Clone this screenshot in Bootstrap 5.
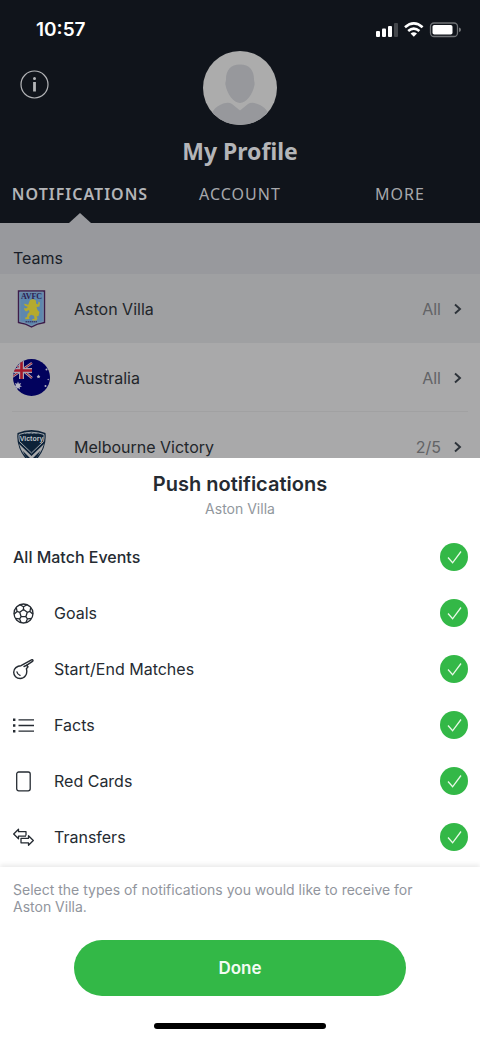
<!DOCTYPE html>
<html lang="en">
<head>
<meta charset="utf-8">
<meta name="viewport" content="width=device-width, initial-scale=1">
<title>My Profile</title>
<link href="https://cdn.jsdelivr.net/npm/bootstrap@5.3.0/dist/css/bootstrap.min.css" rel="stylesheet">
<style>
  body { font-family: Inter, "Liberation Sans", sans-serif; font-size: 16px; line-height: 24px; color: #252b32; background: #fff; }
  svg { display: block; flex: none; }
  .screen { flex: 1 1 0; min-height: 0; overflow: hidden; background: #a9a9aa; }
  .masthead { background: #10141b; color: #b4b5b8; }
  .status-bar { padding: 18px 19px 0 36px; height: 51px; color: #fff; }
  .clock { font-size: 19px; font-weight: 600; }
  .hero { display: grid; grid-template-columns: 1fr auto 1fr; padding: 0 20px; }
  .info-btn { width: 29px; height: 29px; margin-top: 19px; color: #b4b5b8; }
  .page-title { font: 700 23px/30px "Noto Sans", sans-serif; margin: 11px 0 0; }
  .tab-link { display: block; position: relative; padding: 16px 0 17px; font: 400 16px/24px "Noto Sans", sans-serif; letter-spacing: 1px; color: #a7a8ac; text-decoration: none; }
  .tab-link.active { font-weight: 600; color: #b4b5b8; }
  .tab-link.active::after { content: ""; position: absolute; bottom: 0; left: 50%; margin-left: -11px; border: 11px solid transparent; border-top-width: 0; border-bottom: 10px solid #98999d; }
  .section-title { background: #98999d; color: #191e29; font-size: 16px; font-weight: 400; line-height: 24px; padding: 23px 13px 4px; margin: 0; }
  .team { height: 69px; padding: 0 18px 0 13px; color: #22262b; text-decoration: none; position: relative; }
  .team.picked { background: #9fa0a2; }
  .team:not(.picked)::after { content: ""; position: absolute; left: 12px; right: 12px; bottom: 0; border-bottom: 1px solid #a1a1a2; }
  .crest { width: 37px; margin-right: 24px; }
  .team-value { color: #626366; margin-right: 13px; }
  .sheet-head { padding: 12px 13px 9px; }
  .sheet-title { font-size: 20px; line-height: 28px; font-weight: 600; margin: 0; }
  .sheet-sub { font-size: 14px; line-height: 22px; color: #91979d; margin: 0; }
  .event { height: 56px; padding: 0 12px 0 13px; }
  .event svg { width: 21px; margin-right: 20px; color: #252b32; }
  .tick { appearance: none; width: 28px; height: 28px; margin: 0; border-radius: 50%; background: #ccc; }
  .tick:checked { background: #33b847 url("data:image/svg+xml,%3Csvg xmlns='http://www.w3.org/2000/svg' viewBox='0 0 28 28'%3E%3Cpath d='M8 14.5l4.6 5.3L21 8.5' fill='none' stroke='%23e9f9e8' stroke-width='1.3'/%3E%3C/svg%3E"); }
  .sheet-foot { padding: 14px 13px 11px; margin-top: 2px; box-shadow: 0 -2px 5px rgba(0,0,0,.09); }
  .hint { font-size: 14px; line-height: 17px; color: #91959d; margin: 0 36px 25px 0; }
  .done-btn, .done-btn:hover { width: 73%; height: 56px; padding: 2px 0 0; border: 0; border-radius: 28px; background: #33b847; color: #f3fcf3; font-weight: 600; font-size: 17px; }
  .home-bar { width: 172px; height: 6px; border-radius: 3px; background: #000; margin: 27px auto 0; }
</style>
</head>
<body>
<div class="d-flex flex-column vh-100">
  <main class="screen">
    <header class="masthead">
      <div class="status-bar d-flex justify-content-between">
        <span class="clock">10:57</span>
        <svg width="86" height="24" viewBox="0 0 86 24" fill="#fff">
          <rect x="1" y="13" width="4" height="6" rx="1"/><rect x="7" y="10.500" width="4" height="8.500" rx="1"/><rect x="13" y="8" width="4" height="11" rx="1"/><rect x="19" y="5" width="4" height="14" rx="1" fill="#44474c"/>
          <g fill="none" stroke="#fff" stroke-width="2.600"><path d="M30 9.300Q38.800 1.600 47.600 9.300M33.200 13Q38.800 8.200 44.400 13"/></g><path d="M35.600 15.600q3.200-2.800 6.400 0L38.800 18.800z"/>
          <rect x="55.500" y="5" width="27" height="13.500" rx="3.500" fill="none" stroke="#6f7276" stroke-width="1.300"/><rect x="57.500" y="7" width="20" height="9.500" rx="1.800"/><path d="M84 9.500q2 .5 2 2.300T84 14z" fill="#77797d"/>
        </svg>
      </div>
      <div class="hero">
        <button type="button" class="info-btn btn p-0 border-0" aria-label="Information">
          <svg width="29" height="29" viewBox="0 0 29 29"><circle cx="14.500" cy="14.500" r="13.500" fill="none" stroke="currentColor" stroke-width="1.200"/><circle cx="14.500" cy="8.600" r="1.500" fill="currentColor"/><path d="M14.500 12v9.500" stroke="currentColor" stroke-width="2.800"/></svg>
        </button>
        <div class="text-center">
          <svg class="mx-auto" width="74" height="74" viewBox="0 0 74 74"><clipPath id="face"><circle cx="37" cy="37" r="37"/></clipPath><g clip-path="url(#face)"><path fill="#acacac" d="M0 0h74v74H0z"/><path fill="#97989c" d="M37 13.500c9.500 0 14 6 14 14.500 0 3 1 3 .5 6C50 43 43 52 37 52S24 43 22.500 34c-.5-3 .5-3 .5-6 0-8.500 4.500-14.500 14-14.500z"/><path fill="#97989c" d="M7 76c0-12 2-18 10-22 5-2.500 9-3 12-1l8 6.500 8-6.500c3-2 7-1.500 12 1 8 4 10 10 10 22z"/></g></svg>
          <h1 class="page-title">My Profile</h1>
        </div>
      </div>
      <nav class="row g-0 text-center">
        <a href="#" class="tab-link active col-4" aria-current="page">NOTIFICATIONS</a>
        <a href="#" class="tab-link col-4">ACCOUNT</a>
        <a href="#" class="tab-link col-4">MORE</a>
      </nav>
    </header>
    <h2 class="section-title">Teams</h2>
    <a href="#" class="team picked d-flex align-items-center">
      <svg class="crest" height="38" viewBox="0 0 37 38"><path d="M5.500 1h26v31.500Q24 33.500 18.500 37 13 33.500 5.500 32.500z" fill="#5d87ae" stroke="#3d1c49" stroke-width="1.400"/><path d="M6.800 2.200h23.400v29.300q-6.700 1-11.700 4-5-3-11.700-4z" fill="none" stroke="#8295a8" stroke-width=".7"/><text x="18.500" y="9.200" text-anchor="middle" font-family="Liberation Serif" font-weight="700" font-size="8" fill="#30204e">AVFC</text><path fill="#b5aa2e" d="M17 10l3-1 3 1.500v3l2 1 .5-3 1.500 1-.5 4-3 .5 1 3 2 2-1 4-2 .5 1 2-1 2h-4l-.5-1.300 2.500-.5-.5-3-3-1-2 2 .5 2.300-4 .2-.5-1.500 2-.7.500-3 2-2-.5-2-3 1.500-1.500-1.500-.5-2 2 .5 2-1.500-3-1.300-1.200-2 2.300.3 2 1z"/><path d="M12.500 31.800h12" stroke="#30204e" stroke-width="1" stroke-dasharray="1.500 .5"/></svg>
      <span>Aston Villa</span><span class="team-value ms-auto">All</span>
      <svg width="8" height="12" viewBox="0 0 8 12" fill="none" stroke="#2d333a" stroke-width="1.900"><path d="M1 1.500L6 6l-5 4.500"/></svg>
    </a>
    <a href="#" class="team d-flex align-items-center">
      <svg class="crest" height="37" viewBox="0 0 37 37"><clipPath id="disc"><circle cx="18.500" cy="18.500" r="18.500"/></clipPath><g clip-path="url(#disc)"><path fill="#02025d" d="M0 0h37v37H0z"/><path d="M-4 0L19 19M19 4L-4 20" stroke="#a8a4b2" stroke-width="2.600"/><path d="M-4 0L19 19M19 4L-4 20" stroke="#a3172a" stroke-width="1"/><path d="M8.500 0v20M0 11.500h19" stroke="#a8a4b2" stroke-width="5"/><path d="M8.500 0v20M0 11.500h19" stroke="#a3172a" stroke-width="2.600"/></g><g fill="#b6b6c4"><path d="M5 22.500l.9 2.200 2.300-.6-1.200 2.100 2 1.300-2.300.5.200 2.400-1.900-1.500-1.900 1.500.2-2.400-2.300-.5 2-1.300L1.800 24l2.300.7z"/><path d="M25.500 15.500l.6 1.200 1.300.3-.9 1 .2 1.300-1.200-.6-1.200.6.200-1.300-.9-1 1.300-.3z"/><circle cx="33.500" cy="10.500" r="1"/><circle cx="32.500" cy="27" r="1"/><circle cx="35.200" cy="20.500" r=".7"/></g></svg>
      <span>Australia</span><span class="team-value ms-auto">All</span>
      <svg width="8" height="12" viewBox="0 0 8 12" fill="none" stroke="#2d333a" stroke-width="1.900"><path d="M1 1.500L6 6l-5 4.500"/></svg>
    </a>
    <a href="#" class="team d-flex align-items-center">
      <svg class="crest" height="37" viewBox="0 0 37 37"><path d="M4.500 5Q18.500-1 32.500 5q2 17-14 32Q2.500 22 4.500 5z" fill="#0d2238"/><path d="M6 6.500q12.500-4.500 25 0 .3 3.500-.5 7L18.500 25 6.500 13.500Q5.700 10 6 6.500z" fill="none" stroke="#a2a8ad" stroke-width="1"/><path d="M6 16l12.500 12L31 16q-1.500 5-4 9l-8.500 10.500L10 25q-2.500-4-4-9z" fill="#a9aaac"/><path d="M9.500 22.500l9 9 9-9-2.500 5-6.500 8-6.500-8z" fill="#0d2238"/><path d="M12 5.400h13" stroke="#7f8b98" stroke-width="1" stroke-dasharray="1 .4"/><text x="18.500" y="13" text-anchor="middle" font-family="Liberation Sans" font-weight="700" font-size="7" fill="#bcc0c4">Victory</text></svg>
      <span>Melbourne Victory</span><span class="team-value ms-auto">2/5</span>
      <svg width="8" height="12" viewBox="0 0 8 12" fill="none" stroke="#2d333a" stroke-width="1.900"><path d="M1 1.500L6 6l-5 4.500"/></svg>
    </a>
  </main>

  <section class="bg-white" aria-labelledby="sheet-title">
    <div class="sheet-head text-center">
      <h2 class="sheet-title" id="sheet-title">Push notifications</h2>
      <p class="sheet-sub">Aston Villa</p>
    </div>
    <form>
      <label class="event d-flex align-items-center fw-medium" for="ev-all"><span>All Match Events</span><input class="tick ms-auto" type="checkbox" id="ev-all" checked></label>
      <label class="event d-flex align-items-center" for="ev-goals">
        <svg height="21" viewBox="0 0 21 21" fill="none" stroke="currentColor" stroke-width="1.300" stroke-linejoin="round"><circle cx="10.500" cy="10.500" r="9.500"/><path d="M10.500 6.500l3.800 2.800-1.450 4.400h-4.700L6.700 9.300zM10.500 6.500V3.800M14.300 9.300l2.600-.9M12.850 13.700l1.550 2.200M8.150 13.700L6.600 15.900M6.700 9.300l-2.600-.9M6.900 1.700l3.600 2.100 3.600-2.100M17.800 4.400l-.9 4 3.100 2.800M18.600 15.500l-4.200.4-1.600 3.800M8.200 19.700l-1.600-3.800-4.200-.4M1 11.200l3.100-2.800-.9-4"/></svg>
        <span>Goals</span><input class="tick ms-auto" type="checkbox" id="ev-goals" checked></label>
      <label class="event d-flex align-items-center" for="ev-start">
        <svg height="21" viewBox="0 0 21 21" fill="none" stroke="currentColor" stroke-width="1.400" stroke-linejoin="round" stroke-linecap="round"><path d="M8 6.700L18.500.8c1.300-.5 2 .8 1 1.600L13.500 6.300l1.500 1.500-1.600 1.900c1.500 5.500-1.800 9.800-6.200 9.800-3.800 0-6.500-2.800-6.500-6.300C.7 9.700 4 6.700 8 6.700z"/><path d="M11 7.500l2.500-1.200M4 13c.3 1.700 1.300 2.800 3 3.300"/></svg>
        <span>Start/End Matches</span><input class="tick ms-auto" type="checkbox" id="ev-start" checked></label>
      <label class="event d-flex align-items-center" for="ev-facts">
        <svg height="21" viewBox="0 0 21 21" stroke="currentColor" stroke-width="1.300"><path d="M5.500 4.800H21M5.500 10.500H21M5.500 16.200H21"/><path d="M0 4.800h2.400M0 10.500h2.400M0 16.200h2.400" stroke-width="2.400"/></svg>
        <span>Facts</span><input class="tick ms-auto" type="checkbox" id="ev-facts" checked></label>
      <label class="event d-flex align-items-center" for="ev-cards">
        <svg height="21" viewBox="0 0 21 21" fill="none" stroke="currentColor" stroke-width="1.300"><rect x="3.700" y="1" width="13.500" height="18.800" rx="2"/></svg>
        <span>Red Cards</span><input class="tick ms-auto" type="checkbox" id="ev-cards" checked></label>
      <label class="event d-flex align-items-center" for="ev-transfers">
        <svg height="21" viewBox="0 0 21 21" fill="none" stroke="currentColor" stroke-width="1.300" stroke-linejoin="round"><path d="M13 8.500V4.700H5.500V2.200L.7 7l4.800 4.800V9.200H13"/><path d="M8 11.500v4.300h7.500v2.500l4.800-4.800-4.800-4.800v2.600H8z"/></svg>
        <span>Transfers</span><input class="tick ms-auto" type="checkbox" id="ev-transfers" checked></label>
      <div class="sheet-foot">
        <p class="hint">Select the types of notifications you would like to receive for Aston Villa.</p>
        <button type="button" class="done-btn btn d-block mx-auto">Done</button>
        <div class="home-bar"></div>
      </div>
    </form>
  </section>
</div>
<script src="https://cdn.jsdelivr.net/npm/bootstrap@5.3.0/dist/js/bootstrap.bundle.min.js"></script>
</body>
</html>
